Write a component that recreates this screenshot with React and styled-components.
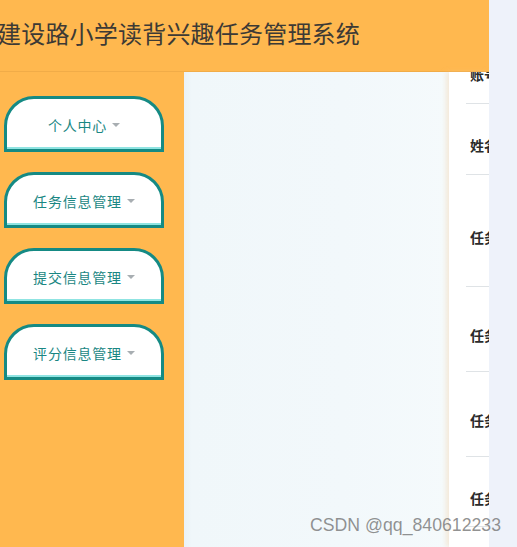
import React from 'react'
import styled, { createGlobalStyle } from 'styled-components'

const GlobalStyle = createGlobalStyle`
  html, body {
    margin: 0;
    padding: 0;
    overflow: hidden;
  }
  body {
    font-family: "Noto Sans CJK SC", "Noto Sans", sans-serif;
  }
  * { box-sizing: border-box; }
`

const Page = styled.div`
  position: relative;
  display: flex;
  width: 517px;
  height: 547px;
  overflow: hidden;
  background: #eef2fa;
`

const Frame = styled.div`
  display: flex;
  flex-direction: column;
  width: 489px;
  height: 100%;
  overflow: hidden;
`

const Header = styled.div`
  display: flex;
  align-items: center;
  height: 72px;
  flex-shrink: 0;
  background: #ffb84f;
  border-bottom: 1px solid #f1ac48;
  padding-bottom: 6px;
`

const Title = styled.h1`
  margin: 0 0 0 -3px;
  font-size: 24px;
  font-weight: 400;
  color: #3d3a35;
  white-space: nowrap;
  letter-spacing: 0.2px;
`

const Body = styled.div`
  display: flex;
  flex: 1;
  min-height: 0;
`

const Sidebar = styled.div`
  display: flex;
  flex-direction: column;
  gap: 20px;
  width: 184px;
  flex-shrink: 0;
  background: #ffb84f;
  padding: 24px 0 0 4px;
`

const MenuButton = styled.div`
  display: flex;
  align-items: center;
  justify-content: center;
  width: 160px;
  height: 56px;
  background: #fff;
  border: 3px solid #158a84;
  border-radius: 30px 30px 0 0;
  box-shadow: inset 0 -2px 0 #8fe4e2;
  color: #1a8783;
  font-size: 14px;
  font-weight: 400;
  letter-spacing: 0.8px;
  padding-top: 2px;
  cursor: pointer;
`

const Caret = styled.span`
  display: inline-block;
  margin-left: 5px;
  width: 0;
  height: 0;
  border-left: 4px solid transparent;
  border-right: 4px solid transparent;
  border-top: 4px solid #a8aeb2;
`

const Main = styled.div`
  flex: 1;
  background: linear-gradient(90deg, #eaf2f8 0px, #f0f7fa 8px, #f2f8fb 60%, #f5fafc 100%);
`

const InfoCard = styled.div`
  width: 40px;
  flex-shrink: 0;
  background: #fff;
  box-shadow: -3px 0 5px rgba(240, 200, 150, 0.35);
  overflow: hidden;
  padding-left: 17px;
`

const InfoList = styled.div`
  margin-top: -40px;
`

const InfoRow = styled.div`
  display: flex;
  align-items: center;
  height: ${p => p.h}px;
  padding-top: 12px;
  padding-left: 4px;
  border-bottom: 1px solid #dfe3e6;
  font-size: 14px;
  font-weight: 700;
  color: #2b2b2b;
  white-space: nowrap;
`

const Strip = styled.div`
  flex: 1;
  background: #eef2fa;
`

const Watermark = styled.div`
  position: absolute;
  left: 310px;
  top: 515px;
  font-family: "Liberation Sans", Arial, sans-serif;
  font-size: 17.7px;
  color: rgba(110, 110, 110, 0.75);
  white-space: nowrap;
  pointer-events: none;
`

const menus = ['个人中心', '任务信息管理', '提交信息管理', '评分信息管理']

const rows = [
  { label: '账号', h: 72 },
  { label: '姓名', h: 71 },
  { label: '任务名称', h: 112 },
  { label: '任务类型', h: 85 },
  { label: '任务内容', h: 85 },
  { label: '任务评分', h: 70 },
]

const App = () => {
  return (
    <Page>
      <GlobalStyle />
      <Frame>
        <Header>
          <Title>建设路小学读背兴趣任务管理系统</Title>
        </Header>
        <Body>
          <Sidebar>
            {menus.map(m => (
              <MenuButton key={m}>
                {m}
                <Caret />
              </MenuButton>
            ))}
          </Sidebar>
          <Main />
          <InfoCard>
            <InfoList>
              {rows.map((r, i) => (
                <InfoRow key={i} h={r.h}>{r.label}</InfoRow>
              ))}
            </InfoList>
          </InfoCard>
        </Body>
      </Frame>
      <Strip />
      <Watermark>CSDN @qq_840612233</Watermark>
    </Page>
  )
}

export default App
